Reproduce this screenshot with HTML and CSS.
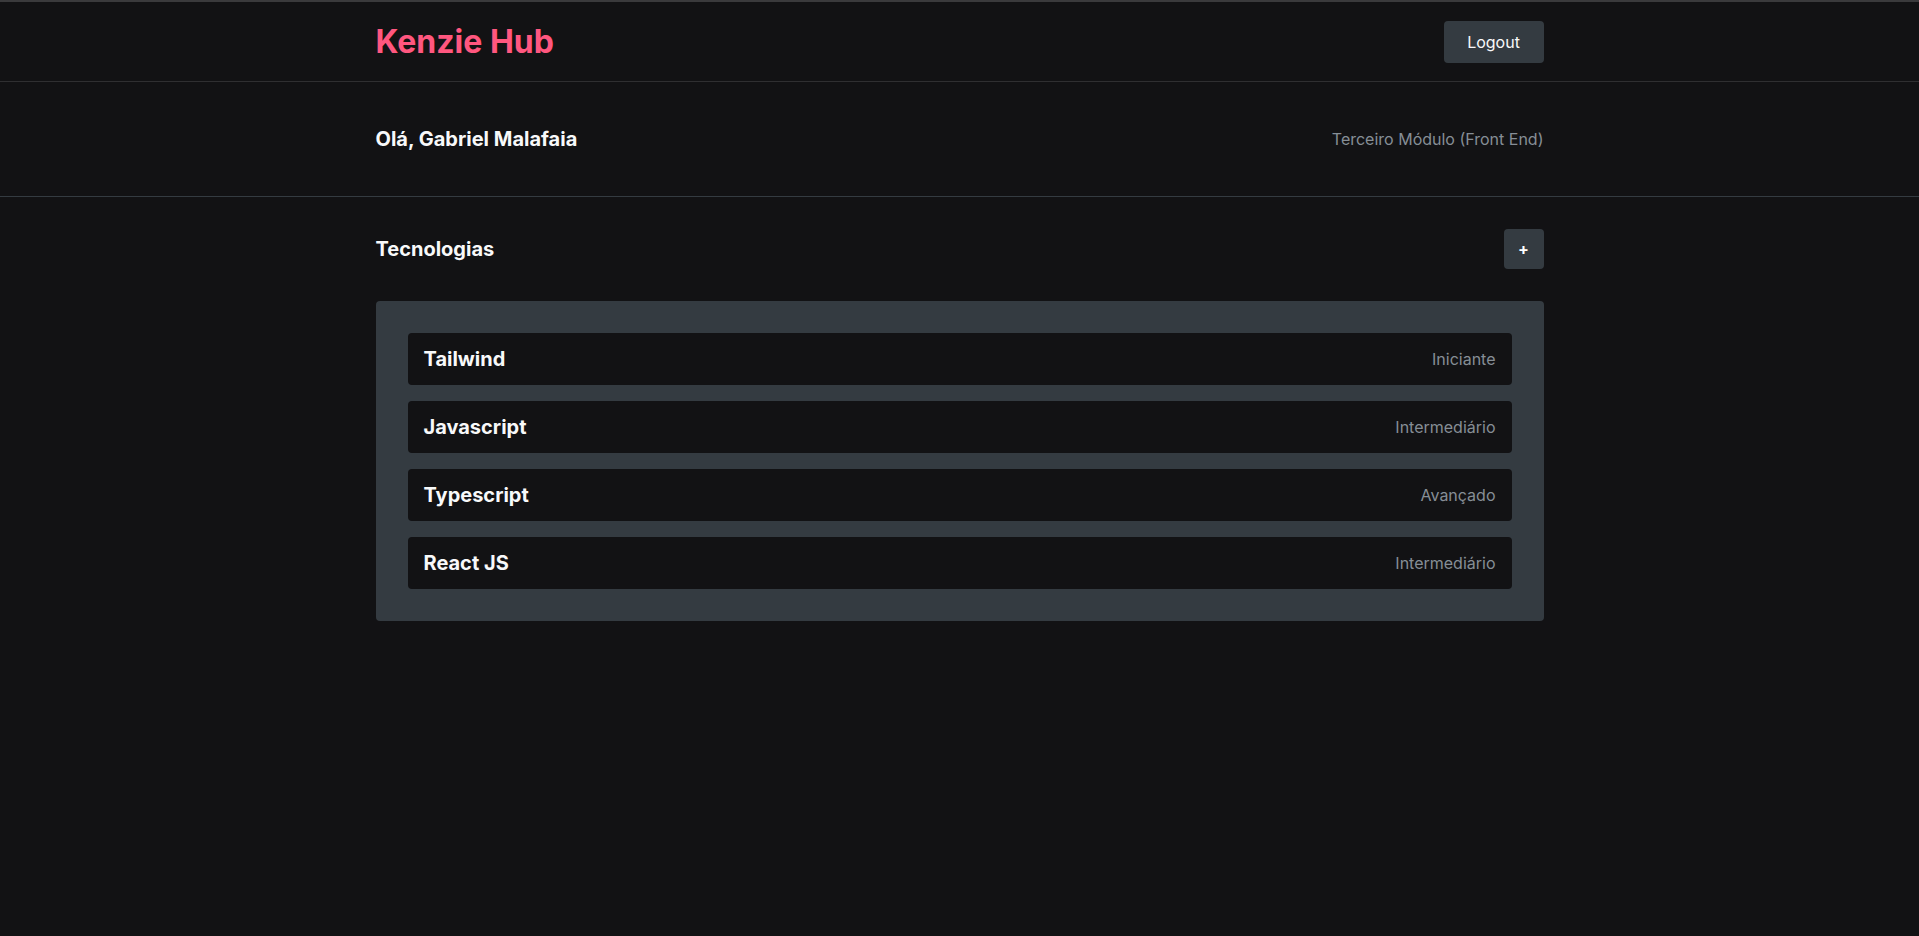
FILE: index.html
```html
<!DOCTYPE html>
<html lang="pt-BR">
<head>
<meta charset="UTF-8">
<meta name="viewport" content="width=device-width, initial-scale=1.0">
<title>Kenzie Hub - Dashboard</title>
<link rel="stylesheet" href="styles.css">
</head>
<body>
<header class="header">
    <div class="container header-inner">
        <h1 class="logo">Kenzie Hub</h1>
        <button class="btn-logout">Logout</button>
    </div>
</header>

<section class="user">
    <div class="container user-inner">
        <h2 class="user-name">Olá, Gabriel Malafaia</h2>
        <p class="user-module">Terceiro Módulo (Front End)</p>
    </div>
</section>

<main class="container techs">
    <div class="techs-head">
        <h3 class="techs-title">Tecnologias</h3>
        <button class="btn-add">+</button>
    </div>
    <ul class="techs-list">
        <li class="tech-card">
            <span class="tech-name">Tailwind</span>
            <span class="tech-status">Iniciante</span>
        </li>
        <li class="tech-card">
            <span class="tech-name">Javascript</span>
            <span class="tech-status">Intermediário</span>
        </li>
        <li class="tech-card">
            <span class="tech-name">Typescript</span>
            <span class="tech-status">Avançado</span>
        </li>
        <li class="tech-card">
            <span class="tech-name">React JS</span>
            <span class="tech-status">Intermediário</span>
        </li>
    </ul>
</main>
</body>
</html>
```

FILE: styles.css
```css
* {
    box-sizing: border-box;
}

body {
    margin: 0;
    padding: 0;
    min-height: 100vh;
    background-color: #121214;
    border-top: 2px solid #3a3a3c;
    font-family: Inter, "Noto Sans", sans-serif;
    color: #f8f9fa;
}

h1, h2, h3, p, ul {
    margin: 0;
    padding: 0;
}

.container {
    width: 1168px;
    margin: 0 auto;
}

/* topo */
.header {
    border-bottom: 1px solid #2f2f31;
}
.header-inner {
    height: 79px;
    display: flex;
    align-items: center;
    justify-content: space-between;
}
.logo {
    font-size: 32px;
    font-weight: 700;
    color: #ff577f;
}
.btn-logout {
    width: 100px;
    height: 42px;
    border: none;
    border-radius: 4px;
    background-color: #343b41;
    color: #f8f9fa;
    font-family: inherit;
    font-size: 16px;
    font-weight: 400;
    cursor: pointer;
}

/* usuario */
.user {
    border-bottom: 1px solid #343b41;
}
.user-inner {
    height: 114px;
    display: flex;
    align-items: center;
    justify-content: space-between;
}
.user-name {
    font-size: 20px;
    font-weight: 700;
}
.user-module {
    font-size: 16px;
    color: #868e96;
}

/* tecnologias */
.techs {
    padding-top: 32px;
}
.techs-head {
    display: flex;
    align-items: center;
    justify-content: space-between;
    margin-bottom: 32px;
}
.techs-title {
    font-size: 20px;
    font-weight: 700;
}
.btn-add {
    width: 40px;
    height: 40px;
    border: none;
    border-radius: 4px;
    background-color: #343b41;
    color: #fff;
    font-family: inherit;
    font-size: 16px;
    font-weight: 700;
    cursor: pointer;
}
.techs-list {
    list-style: none;
    background-color: #343b41;
    border-radius: 4px;
    padding: 32px;
    display: flex;
    flex-direction: column;
    gap: 16px;
}
.tech-card {
    height: 52px;
    padding: 0 16px;
    display: flex;
    align-items: center;
    justify-content: space-between;
    background-color: #121214;
    border-radius: 4px;
}
.tech-name {
    font-size: 20px;
    font-weight: 700;
}
.tech-status {
    font-size: 16px;
    color: #868e96;
}
```
